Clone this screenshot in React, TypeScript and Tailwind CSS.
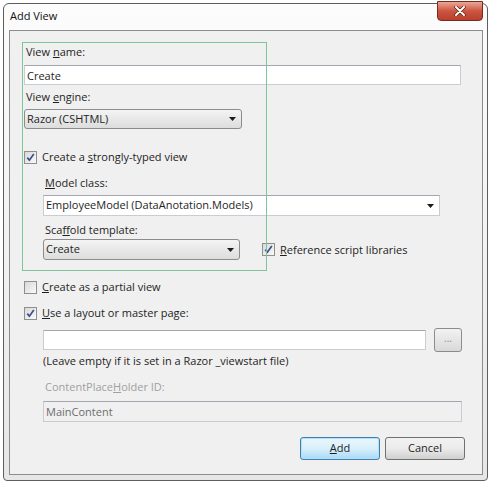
import React from 'react';

const Arrow = () => (
  <svg width="7" height="4" viewBox="0 0 7 4">
    <path d="M0 0h7L3.5 4z" fill="#1a1a1a" />
  </svg>
);

const Check = ({ checked }: { checked?: boolean }) => (
  <span className="flex h-[13px] w-[13px] shrink-0 items-center justify-center border border-[#8e8f8f] bg-linear-to-br from-[#d8d8d8] to-[#fafafa]">
    {checked && (
      <svg width="9" height="9" viewBox="0 0 9 9">
        <path d="M1.3 4.6l2.1 2.6L7.8 1" stroke="#3b4f8a" strokeWidth="1.7" fill="none" />
      </svg>
    )}
  </span>
);

const Label = ({ children, gray }: { children: React.ReactNode; gray?: boolean }) => (
  <div className={`h-[16px] pl-[2px] leading-[16px] ${gray ? 'text-[#a0a0a0]' : 'text-[#1e1e1e]'}`}>{children}</div>
);

const TextBox = ({ className = '', value = '', disabled }: { className?: string; value?: string; disabled?: boolean }) => (
  <div
    className={`flex items-center border border-[#c9ccd3] border-t-[#a3a6ae] px-[2px] leading-none ${disabled ? 'bg-[#f0f0f0] text-[#6d6d6d]' : 'bg-white text-[#1e1e1e]'} ${className}`}
  >
    {value}
  </div>
);

const Combo = ({ className = '', value }: { className?: string; value: string }) => (
  <div className={`flex items-center justify-between rounded-[3px] border border-[#8c8c8c] bg-linear-to-b from-[#f4f4f4] to-[#dddddd] pl-[2px] pr-[5px] text-[#1e1e1e] ${className}`}>
    <span>{value}</span>
    <Arrow />
  </div>
);

const CheckRow = ({ checked, children }: { checked?: boolean; children: React.ReactNode }) => (
  <div className="flex h-[16px] items-center gap-[5px] leading-[16px] text-[#1e1e1e]">
    <Check checked={checked} />
    <span>{children}</span>
  </div>
);

export default function App() {
  return (
    <div className="h-[483px] w-[490px] overflow-hidden bg-white pl-[3px] pt-[3px] font-['Open_Sans','Noto_Sans',sans-serif] text-[11px]">
      <div className="h-[478px] w-[485px] rounded-t-[6px] rounded-b-[4px] border border-[#5e5e5e] bg-linear-to-b from-[#fcfcfc] via-[#f2f2f2] to-[#e6e6e6]">
        {/* title bar */}
        <div className="flex h-[26px] items-start justify-between">
          <div className="pl-[6px] pt-[4px] text-[11px] text-[#111]">Add View</div>
          <div className="-mt-[3px] mr-[4px] flex h-[20px] w-[46px] items-center justify-center rounded-b-[4px] border border-[#7b2a1e] bg-linear-to-b from-[#e9a796] via-[#cb5540] to-[#b9402e]">
            <svg width="12" height="10" viewBox="0 0 12 10">
              <path d="M2 1l8 8M10 1L2 9" stroke="#5a1d12" strokeWidth="3.4" strokeLinecap="round" />
              <path d="M2 1l8 8M10 1L2 9" stroke="#ffffff" strokeWidth="2" strokeLinecap="round" />
            </svg>
          </div>
        </div>

        {/* client area */}
        <div className="relative ml-[5px] h-[445px] w-[474px] border border-[#8d8d8d] bg-[#f0f0f0] pl-[14px]">
          <div className="mt-[13px]">
            <Label>
              View <u>n</u>ame:
            </Label>
          </div>
          <TextBox className="mt-[5px] h-[20px] w-[437px]" value="Create" />
          <div className="mt-[4px]">
            <Label>
              View <u>e</u>ngine:
            </Label>
          </div>
          <Combo className="mt-[4px] h-[20px] w-[218px]" value="Razor (CSHTML)" />

          <div className="mt-[20px]">
            <CheckRow checked>
              Create a <u>s</u>trongly-typed view
            </CheckRow>
          </div>

          <div className="ml-[19px]">
            <div className="mt-[10px]">
              <Label>
                <u>M</u>odel class:
              </Label>
            </div>
            <div className="mt-[4px] flex h-[21px] w-[397px] items-center justify-between border border-[#c9ccd3] border-t-[#a3a6ae] bg-white pl-[2px] pr-[5px] text-[#1e1e1e]">
              <span>EmployeeModel (DataAnotation.Models)</span>
              <Arrow />
            </div>
            <div className="mt-[6px]">
              <Label>
                Sca<u>f</u>fold template:
              </Label>
            </div>
            <div className="mt-[1px] flex h-[21px] items-center gap-[22px]">
              <Combo className="h-[21px] w-[197px]" value="Create" />
              <CheckRow checked>
                <u>R</u>eference script libraries
              </CheckRow>
            </div>
          </div>

          <div className="mt-[19px]">
            <CheckRow>
              <u>C</u>reate as a partial view
            </CheckRow>
          </div>
          <div className="mt-[10px]">
            <CheckRow checked>
              <u>U</u>se a layout or master page:
            </CheckRow>
          </div>

          <div className="ml-[19px]">
            <div className="mt-[7px] flex h-[24px] items-center gap-[8px]">
              <TextBox className="h-[20px] w-[383px]" />
              <div className="flex h-[24px] w-[28px] items-center justify-center rounded-[3px] border border-[#8c8c8c] bg-linear-to-b from-[#f2f2f2] to-[#d9d9d9] pb-[3px] text-[10px] text-[#8a8a8a]">
                ...
              </div>
            </div>
            <div className="mt-[1px] h-[16px] leading-[16px] text-[#1e1e1e]">
              (Leave empty if it is set in a Razor _viewstart file)
            </div>
            <div className="mt-[10px]">
              <Label gray>
                ContentPlace<u>H</u>older ID:
              </Label>
            </div>
            <TextBox className="mt-[6px] h-[21px] w-[419px]" value="MainContent" disabled />
          </div>

          <div className="mt-[15px] flex justify-end gap-[5px] pr-[17px]">
            <div className="flex h-[23px] w-[80px] items-center justify-center rounded-[3px] border border-[#3c7fb1] bg-linear-to-b from-[#eaf6fd] via-[#d9f0fc] to-[#a7d9f5] text-[#1e1e1e] shadow-[inset_0_0_0_1px_#b8e0f7]">
              <span>
                <u>A</u>dd
              </span>
            </div>
            <div className="flex h-[23px] w-[80px] items-center justify-center rounded-[3px] border border-[#707070] bg-linear-to-b from-[#f2f2f2] via-[#ebebeb] to-[#cfcfcf] text-[#1e1e1e]">
              Cancel
            </div>
          </div>

          {/* green highlight box drawn over the form */}
          <div className="pointer-events-none absolute left-[12px] top-[11px] h-[229px] w-[245px] border border-[#7fc59b]" />
        </div>
      </div>
    </div>
  );
}
